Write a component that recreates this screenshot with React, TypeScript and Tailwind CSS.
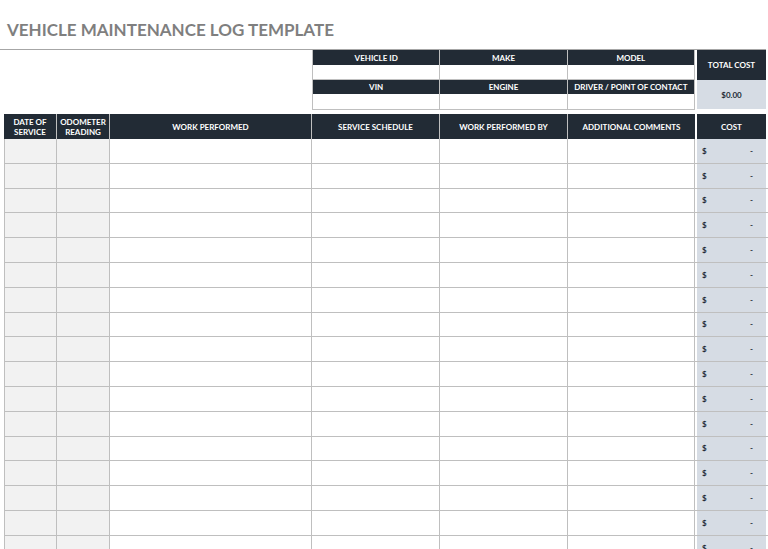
export default function App() {
  const dark = "bg-[#222b35] text-white font-bold text-[8px] flex items-center justify-center text-center leading-[10px]";
  const rows = Array.from({ length: 17 });
  const cols = "grid grid-cols-[53px_53px_202px_128px_128px_127px_2px_69px]";
  return (
    <div className="w-[768px] h-[549px] overflow-hidden bg-white" style={{ fontFamily: '"Lato", "Liberation Sans", sans-serif' }}>
      <div className="h-[49px] pl-[7px] pt-[20px] text-[#7f7f7f] font-bold text-[17px] leading-[20px]">VEHICLE MAINTENANCE LOG TEMPLATE</div>
      <div className="border-t border-[#a6a6a6] w-[766px]" />
      <div className="flex pl-[312px] h-[60px]">
        <div className="w-[383px] grid grid-cols-3 grid-rows-[15px_14px_15px_15px] border-b border-l border-[#bfbfbf]">
          {["VEHICLE ID", "MAKE", "MODEL"].map((t) => <div key={t} className={dark + " border-r border-[#bfbfbf]"}>{t}</div>)}
          {[0, 1, 2].map((i) => <div key={i} className="border-r border-[#bfbfbf]" />)}
          {["VIN", "ENGINE", "DRIVER / POINT OF CONTACT"].map((t) => <div key={t} className={dark + " border-r border-[#bfbfbf] border-t"}>{t}</div>)}
          {[0, 1, 2].map((i) => <div key={i} className="border-r border-[#bfbfbf]" />)}
        </div>
        <div className="ml-[2px] w-[69px] flex flex-col">
          <div className={dark + " h-[30px]"}>TOTAL COST</div>
          <div className="h-[29px] bg-[#d6dce4] text-[#222b35] font-bold text-[8px] flex items-center justify-center">$0.00</div>
        </div>
      </div>
      <div className="pl-[4px] pt-[4px]">
        <div className={cols + " h-[25px]"}>
          <div className={dark + " border-r border-[#bfbfbf]"}>DATE OF<br />SERVICE</div>
          <div className={dark + " border-r border-[#bfbfbf]"}>ODOMETER<br />READING</div>
          <div className={dark + " border-r border-[#bfbfbf]"}>WORK PERFORMED</div>
          <div className={dark + " border-r border-[#bfbfbf]"}>SERVICE SCHEDULE</div>
          <div className={dark + " border-r border-[#bfbfbf]"}>WORK PERFORMED BY</div>
          <div className={dark}>ADDITIONAL COMMENTS</div>
          <div />
          <div className={dark}>COST</div>
        </div>
        {rows.map((_, i) => (
          <div key={i} className={cols + " h-[24.8px] border-b border-[#bfbfbf]"}>
            <div className="bg-[#f2f2f2] border-l border-r border-[#bfbfbf]" />
            <div className="bg-[#f2f2f2] border-r border-[#bfbfbf]" />
            <div className="border-r border-[#bfbfbf]" />
            <div className="border-r border-[#bfbfbf]" />
            <div className="border-r border-[#bfbfbf]" />
            <div className="border-r border-[#bfbfbf]" />
            <div />
            <div className="bg-[#d6dce4] flex items-center justify-between px-[5px] text-[8px] font-bold text-[#222b35]"><span>$</span><span className="pr-[8px]">-</span></div>
          </div>
        ))}
      </div>
    </div>
  );
}
